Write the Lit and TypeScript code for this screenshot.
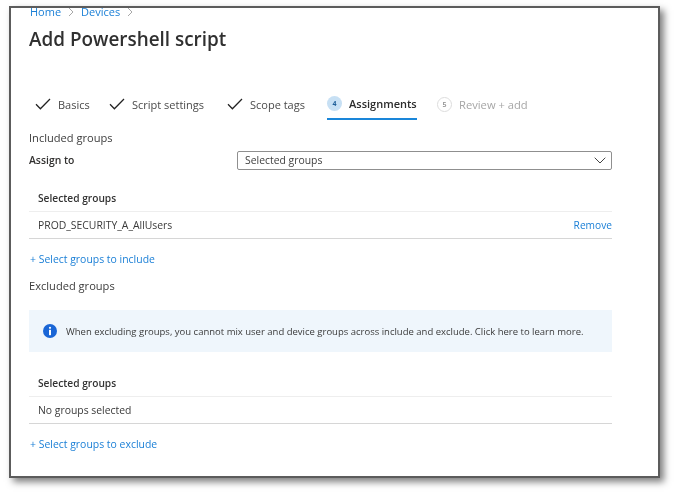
import { LitElement, html, css, svg } from "lit";
import { customElement } from "lit/decorators.js";

const check = svg`<svg class="check" viewBox="0 0 16 12" width="16" height="12"><path d="M1 6.2 5.4 10.8 15 1" fill="none" stroke="#222" stroke-width="1.25"/></svg>`;
const sep = svg`<svg class="sep" viewBox="0 0 6 10" width="6" height="10"><path d="M1 1l4 4-4 4" fill="none" stroke="#a8a8a8" stroke-width="1"/></svg>`;

@customElement("app-root")
export class AppRoot extends LitElement {
  static styles = css`
    :host { display: block; width: 679px; height: 494px; background: #fff; overflow: hidden;
      font-family: "Open Sans", "Noto Sans", sans-serif; color: #323130; font-size: 10.4px; }
    * { box-sizing: border-box; }
    .outer { padding: 6px 0 0 9px; }
    .frame { width: 651px; height: 472px; border: 2px solid #5c5c5c; background: #fff; overflow: hidden;
      padding: 0 0 0 18px; box-shadow: 4px 4px 7px rgba(0,0,0,.5); }
    .content { width: 583px; filter: blur(.45px); }
    a { color: #1a7fd6; text-decoration: none; }
    .crumbs { display: flex; align-items: center; gap: 7px; height: 8px; font-size: 11px; line-height: 8px; padding-left: 1px; }
    .crumbs .sep { flex: none; }
    h1 { margin: 10px 0 0; font-size: 18.9px; line-height: 26px; font-weight: 600; color: #303030; }
    .tabs { display: flex; align-items: stretch; height: 32px; margin-top: 36px; margin-left: 6px; }
    .tab { display: flex; align-items: center; gap: 7px; height: 32px; padding-bottom: 0; white-space: nowrap; font-size: 11px; color: #4a4a4a; }
    .tab.t1 { width: 74px; }
    .tab.t2 { width: 118px; }
    .tab.t3 { width: 100px; }
    .tab.t4 { width: 90px; margin-right: 20px; color: #2b2b2b; font-weight: 600; border-bottom: 2px solid #1a86d9; }
    .tab.t5 { color: #a6a6a6; font-size: 11.2px; }
    .num { width: 15px; height: 15px; border-radius: 50%; display: flex; align-items: center; justify-content: center; font-size: 7px; font-weight: 700; }
    .t4 .num { background: #c7e0f4; color: #1f5f99; }
    .t5 .num { border: 1px solid #dcdcdc; color: #8a8a8a; font-weight: 600; }
    .label { margin-top: 10px; line-height: 16px; font-size: 11.1px; color: #3b3b3b; }
    .assign { display: flex; align-items: center; margin-top: 4px; height: 20px; }
    .assign b { width: 208px; font-weight: 600; color: #323130; }
    .select { width: 375px; height: 19px; border: 1px solid #8f8f8f; border-radius: 2px; display: flex; align-items: center; justify-content: space-between; padding: 0 5px 0 7px; color: #404040; }
    .table { width: 583px; }
    .head { padding-left: 9px; font-weight: 600; font-size: 10.2px; height: 27px; line-height: 26px; border-bottom: 1px solid #eee; color: #333; }
    .row { display: flex; justify-content: space-between; align-items: center; padding-left: 9px; height: 27px; border-bottom: 1px solid #d6d6d6; color: #3a3a3a; }
    .row a { font-size: 10.2px; }
    .t-inc { margin-top: 15px; }
    .add { display: block; margin-top: 12px; line-height: 16px; font-size: 10.45px; padding-left: 1px; }
    .ex { margin-top: 11px; }
    .banner { display: flex; align-items: center; gap: 9px; height: 42px; margin-top: 16px; padding-left: 14px; background: #eff6fc; font-size: 9.5px; color: #3a3a3a; white-space: nowrap; }
    .t-exc { margin-top: 18px; }
  `;

  render() {
    return html`<div class="outer"><div class="frame"><div class="content">
      <nav class="crumbs"><a href="#">Home</a>${sep}<a href="#">Devices</a>${sep}</nav>
      <h1>Add Powershell script</h1>
      <div class="tabs">
        <div class="tab t1">${check}<span>Basics</span></div>
        <div class="tab t2">${check}<span>Script settings</span></div>
        <div class="tab t3">${check}<span>Scope tags</span></div>
        <div class="tab t4"><span class="num">4</span><span>Assignments</span></div>
        <div class="tab t5"><span class="num">5</span><span>Review + add</span></div>
      </div>
      <div class="label">Included groups</div>
      <div class="assign"><b>Assign to</b>
        <div class="select"><span>Selected groups</span>
          <svg viewBox="0 0 12 7" width="12" height="7"><path d="M.7.7 6 6 11.3.7" fill="none" stroke="#444" stroke-width="1"/></svg>
        </div>
      </div>
      <div class="table t-inc">
        <div class="head">Selected groups</div>
        <div class="row"><span>PROD_SECURITY_A_AllUsers</span><a href="#">Remove</a></div>
      </div>
      <a class="add" href="#">+ Select groups to include</a>
      <div class="label ex">Excluded groups</div>
      <div class="banner">
        <svg viewBox="0 0 14 14" width="14" height="14"><circle cx="7" cy="7" r="7" fill="#1a66d6"/><circle cx="7" cy="3.8" r="1.1" fill="#fff"/><rect x="6" y="5.8" width="2" height="5.4" fill="#fff"/></svg>
        <span>When excluding groups, you cannot mix user and device groups across include and exclude. Click here to learn more.</span>
      </div>
      <div class="table t-exc">
        <div class="head">Selected groups</div>
        <div class="row"><span>No groups selected</span></div>
      </div>
      <a class="add" href="#">+ Select groups to exclude</a>
    </div></div></div>`;
  }
}
